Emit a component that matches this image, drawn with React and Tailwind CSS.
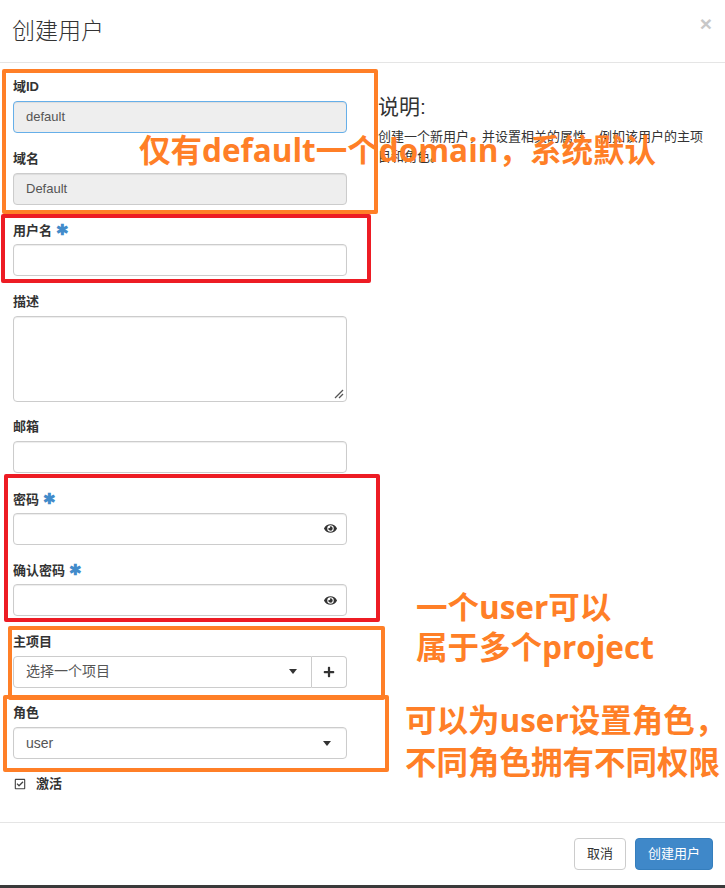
import { FaEye, FaPlus, FaRegCheckSquare } from 'react-icons/fa';

const font = { fontFamily: '"Liberation Sans", "Noto Sans CJK SC", sans-serif' };
const noteFont = { fontFamily: '"Open Sans", "Noto Sans CJK SC", sans-serif' };

function Label({ text, required }) {
    return (
        <label className="block h-[17px] mb-[6px] text-[13px] leading-[17px] font-bold text-[#333]">
            {text}
            {required && <span className="ml-[4px] text-[#428bca] text-[15px] font-bold">✱</span>}
        </label>
    );
}

function Caret() {
    return <span className="inline-block w-0 h-0 border-x-[4px] border-x-transparent border-t-[5px] border-t-[#333]"></span>;
}

function Field({ label, required, children }) {
    return (
        <div className="mb-[16.5px]">
            <Label text={label} required={required} />
            {children}
        </div>
    );
}

const baseInput = 'h-[32px] w-full rounded-[4px] border shadow-[inset_0_1px_1px_rgba(0,0,0,0.075)] px-[12px] flex items-center text-[13px] text-[#555]';
const inputCls = baseInput + ' border-[#ccc] bg-white';

export default function App() {
    return (
        <div className="relative w-[725px] h-[888px] bg-white overflow-hidden" style={font}>
            {/* header */}
            <div className="h-[63px] border-b border-[#e5e5e5] flex items-center justify-between pl-[12px] pr-[13px]">
                <h4 className="text-[23px] font-light text-[#333] leading-none">创建用户</h4>
                <span className="text-[21px] font-bold text-[#c8c8c8] leading-none -mt-[16px]">×</span>
            </div>

            {/* body */}
            <div className="h-[759px] px-[13px] pt-[15px] flex gap-[31px]">
                <div className="w-[334px]">
                    <Field label="域ID">
                        <div className={baseInput + ' border-[#66afe9] bg-[#eee] shadow-[0_0_8px_rgba(102,175,233,0.6)]'}>default</div>
                    </Field>
                    <Field label="域名">
                        <div className={baseInput + ' border-[#ccc] bg-[#eee]'}>Default</div>
                    </Field>
                    <Field label="用户名" required>
                        <div className={inputCls}></div>
                    </Field>
                    <Field label="描述">
                        <div className="relative h-[86px] w-full rounded-[4px] border border-[#ccc] bg-white shadow-[inset_0_1px_1px_rgba(0,0,0,0.075)]">
                            <svg className="absolute right-[2px] bottom-[2px]" width="10" height="10" viewBox="0 0 10 10">
                                <line x1="1" y1="9" x2="9" y2="1" stroke="#555" strokeWidth="1.2" />
                                <line x1="5" y1="9" x2="9" y2="5" stroke="#555" strokeWidth="1.2" />
                            </svg>
                        </div>
                    </Field>
                    <Field label="邮箱">
                        <div className={inputCls}></div>
                    </Field>
                    <Field label="密码" required>
                        <div className={inputCls + ' justify-end pr-[9px]'}>
                            <FaEye className="text-[#333] text-[13px]" />
                        </div>
                    </Field>
                    <Field label="确认密码" required>
                        <div className={inputCls + ' justify-end pr-[9px]'}>
                            <FaEye className="text-[#333] text-[13px]" />
                        </div>
                    </Field>
                    <Field label="主项目">
                        <div className="flex h-[32px]">
                            <div className="flex-1 rounded-l-[4px] border border-[#ccc] px-[12px] flex items-center justify-between text-[14px] text-[#555]">
                                <span>选择一个项目</span>
                                <span className="mr-[2px] flex"><Caret /></span>
                            </div>
                            <div className="w-[35px] rounded-r-[4px] border border-l-0 border-[#ccc] flex items-center justify-center">
                                <FaPlus className="text-[#333] text-[12px]" />
                            </div>
                        </div>
                    </Field>
                    <Field label="角色">
                        <div className={inputCls + ' justify-between text-[14px] pr-[15px]'}>
                            <span>user</span>
                            <Caret />
                        </div>
                    </Field>
                    <div className="flex items-center h-[17px] pl-[1px] text-[13px] text-[#333]">
                        <FaRegCheckSquare className="text-[12px] text-[#444]" />
                        <span className="ml-[10px] font-bold">激活</span>
                    </div>
                </div>
                <div className="w-[334px] pt-[15px]">
                    <h3 className="text-[21px] leading-[28px] text-[#333] font-normal">说明:</h3>
                    <p className="mt-[6px] text-[13px] leading-[20px] text-[#333]">创建一个新用户，并设置相关的属性，例如该用户的主项目和角色。</p>
                </div>
            </div>

            {/* footer */}
            <div className="h-[63px] border-t border-[#e5e5e5] flex items-start justify-end gap-[9px] pt-[15px] pr-[12px]">
                <button className="h-[32px] px-[12px] rounded-[4px] border border-[#ccc] bg-white text-[13px] text-[#333]">取消</button>
                <button className="h-[32px] px-[12px] rounded-[4px] border border-[#357ebd] bg-[#3f88c9] text-[13px] text-white">创建用户</button>
            </div>
            <div className="h-[3px] bg-[#3a3a3a]"></div>

            {/* annotation boxes */}
            <div className="absolute left-[2px] top-[69px] w-[376px] h-[145px] border-[4px] border-[#ff7f27] rounded-[2px]"></div>
            <div className="absolute left-[1px] top-[214px] w-[370px] h-[69px] border-[4px] border-[#ed1c24] rounded-[2px]"></div>
            <div className="absolute left-[4px] top-[474px] w-[376px] h-[148px] border-[4px] border-[#ed1c24] rounded-[2px]"></div>
            <div className="absolute left-[8px] top-[626px] w-[377px] h-[74px] border-[4px] border-[#ff7f27] rounded-[2px]"></div>
            <div className="absolute left-[3px] top-[695px] w-[386px] h-[77px] border-[4px] border-[#ff7f27] rounded-[2px]"></div>

            {/* annotation text */}
            <div className="absolute left-[139px] top-[130px] text-[31.5px] leading-[40px] font-bold text-[#ff7f27] whitespace-nowrap" style={noteFont}>仅有default一个domain，系统默认</div>
            <div className="absolute left-[416px] top-[587px] text-[31.5px] leading-[40px] font-bold text-[#ff7f27] whitespace-nowrap" style={noteFont}>
                <div>一个user可以</div>
                <div>属于多个project</div>
            </div>
            <div className="absolute left-[405px] top-[699px] text-[31.5px] leading-[42px] font-bold text-[#ff7f27] whitespace-nowrap" style={noteFont}>
                <div>可以为user设置角色，</div>
                <div>不同角色拥有不同权限</div>
            </div>
        </div>
    );
}
